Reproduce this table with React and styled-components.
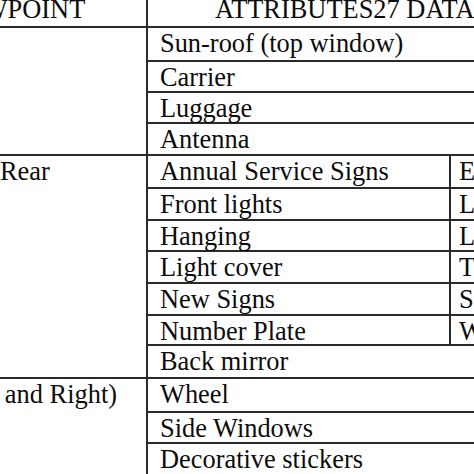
import React from "react";
import styled, { createGlobalStyle } from "styled-components";

const Global = createGlobalStyle`
  html, body { margin: 0; padding: 0; background: #fff; }
`;

const Frame = styled.div`
  width: 474px;
  height: 474px;
  overflow: hidden;
  background: #fff;
`;

const Table = styled.table`
  border-collapse: collapse;
  table-layout: fixed;
  width: 773px;
  margin: -8px 0 0 -124px;
  font-family: "Liberation Serif", "Times New Roman", serif;
  font-size: 26.4px;
  line-height: 26px;
  color: #0c0c0c;
`;

const Row = styled.tr`
  height: ${(p) => p.$h}px;
`;

const Cell = styled.td`
  border: 2px solid #2a2a2a;
  padding: 2px 6px 0 ${(p) => (p.$pad != null ? p.$pad : 12)}px;
  vertical-align: top;
  white-space: nowrap;
  text-align: ${(p) => p.$align || "left"};
  font-weight: normal;
`;

const Head = styled(Cell).attrs({ as: "th" })``;

const groups = [
  {
    label: "",
    pad: 12,
    rows: [
      { a: "Sun-roof (top window)", h: 34 },
      { a: "Carrier", h: 31 },
      { a: "Luggage", h: 31 },
      { a: "Antenna", h: 32 },
    ],
  },
  {
    label: "Rear",
    pad: 122,
    rows: [
      { a: "Annual Service Signs", b: "E", h: 33 },
      { a: "Front lights", b: "L", h: 32 },
      { a: "Hanging", b: "L", h: 31 },
      { a: "Light cover", b: "T", h: 32 },
      { a: "New Signs", b: "S", h: 32 },
      { a: "Number Plate", b: "W", h: 30 },
      { a: "Back mirror", h: 33 },
    ],
  },
  {
    label: "Side (Left and Right)",
    pad: 14,
    rows: [
      { a: "Wheel", h: 34 },
      { a: "Side Windows", h: 31 },
      { a: "Decorative stickers", h: 32 },
    ],
  },
];

export default function App() {
  return (
    <>
      <Global />
      <Frame>
        <Table>
          <colgroup>
            <col style={{ width: 270 }} />
            <col style={{ width: 303 }} />
            <col style={{ width: 200 }} />
          </colgroup>
          <tbody>
            <Row $h={34}>
              <Head $align="center" $pad={6}>VIEWPOINT</Head>
              <Head colSpan={2} $pad={67}>ATTRIBUTES27 DATA</Head>
            </Row>
            {groups.map((g, gi) =>
              g.rows.map((r, ri) => (
                <Row key={`${gi}-${ri}`} $h={r.h}>
                  {ri === 0 && (
                    <Cell rowSpan={g.rows.length} $pad={g.pad}>
                      {g.label}
                    </Cell>
                  )}
                  {r.b ? (
                    <>
                      <Cell>{r.a}</Cell>
                      <Cell $pad={8}>{r.b}</Cell>
                    </>
                  ) : (
                    <Cell colSpan={2}>{r.a}</Cell>
                  )}
                </Row>
              ))
            )}
          </tbody>
        </Table>
      </Frame>
    </>
  );
}
